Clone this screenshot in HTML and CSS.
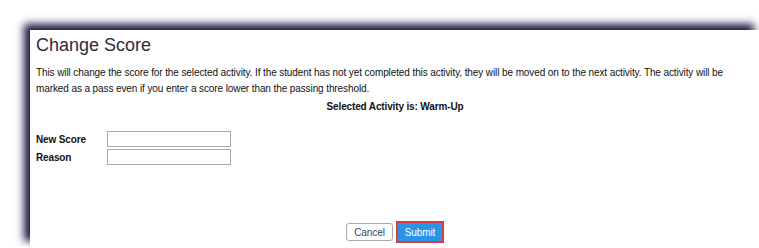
FILE: index.html
```html
<!DOCTYPE html>
<html>
<head>
<meta charset="utf-8">
<link rel="stylesheet" href="styles.css">
</head>
<body>
<div class="frame">
  <h1 class="title">Change Score</h1>
  <p class="info">This will change the score for the selected activity. If the student has not yet completed this activity, they will be moved on to the next activity. The activity will be marked as a pass even if you enter a score lower than the passing threshold.</p>
  <p class="selected">Selected Activity is: Warm-Up</p>
  <div class="form">
    <label class="label" for="score">New Score</label>
    <input class="field" id="score" type="text">
    <label class="label" for="reason">Reason</label>
    <input class="field" id="reason" type="text">
  </div>
  <div class="actions">
    <button class="btn cancel" type="button">Cancel</button>
    <button class="btn submit" type="button">Submit</button>
  </div>
</div>
</body>
</html>
```
FILE: styles.css
```css
html, body {
  margin: 0;
  padding: 0;
  background: #ffffff;
  overflow: hidden;
}
body {
  font-family: "Liberation Sans", Arial, sans-serif;
  color: #111;
}
.frame {
  margin: 30px 0 0 30px;
  width: 718px;
  height: 217px;
  padding: 0 6px;
  background: #ffffff;
  box-shadow: -6px -6px 8px #1e1846;
  display: flex;
  flex-direction: column;
}
.title {
  margin: 4px 0 0 0;
  font-size: 18px;
  line-height: 22px;
  font-weight: normal;
  color: #2d2d3a;
}
.info {
  margin: 9px 0 0 0;
  font-size: 10px;
  letter-spacing: -0.1px;
  line-height: 16px;
  color: #111;
}
.selected {
  margin: 2px 0 0 0;
  font-size: 10px;
  letter-spacing: -0.14px;
  line-height: 16px;
  font-weight: bold;
  text-align: center;
  color: #111;
}
.form {
  margin-top: 16px;
  display: grid;
  grid-template-columns: 71px 124px;
  row-gap: 2px;
  align-items: center;
}
.label {
  font-size: 10px;
  letter-spacing: -0.14px;
  font-weight: bold;
  color: #111;
}
.field {
  box-sizing: border-box;
  width: 124px;
  height: 16px;
  margin: 0;
  padding: 0 2px;
  border: 1px solid #a9a9a9;
  border-radius: 0;
  font-size: 10px;
  font-family: "Liberation Sans", Arial, sans-serif;
}
.actions {
  margin-top: auto;
  margin-bottom: 4px;
  display: flex;
  justify-content: center;
  align-items: center;
  gap: 3px;
}
.btn {
  box-sizing: border-box;
  font-family: "Liberation Sans", Arial, sans-serif;
  font-size: 10px;
  letter-spacing: -0.1px;
  height: 18px;
  margin: 0;
  padding: 0;
  cursor: pointer;
}
.cancel {
  width: 47px;
  background: #ffffff;
  border: 1px solid #aaaaaa;
  border-radius: 3px;
  color: #2f3f6f;
}
.submit {
  width: 48px;
  height: 22px;
  background: #2995e6;
  border: 2px solid #e53a3a;
  border-radius: 0;
  color: #ffffff;
}
```
